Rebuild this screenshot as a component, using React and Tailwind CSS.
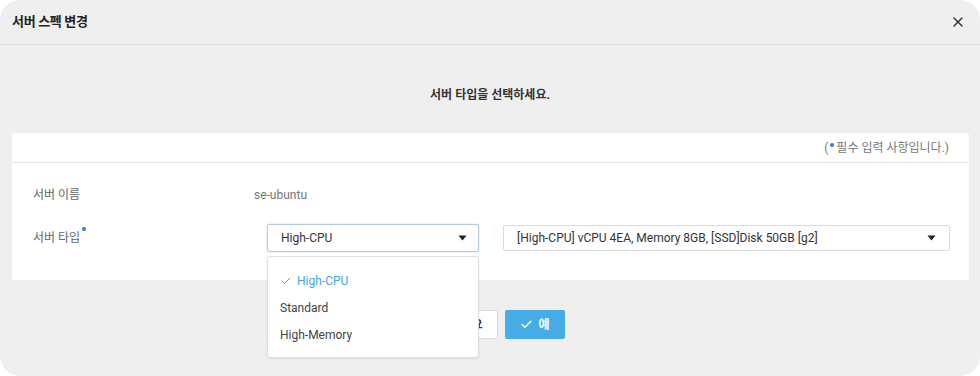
import { Check, X } from 'lucide-react';

const font = { fontFamily: 'Roboto, "Noto Sans CJK KR", sans-serif' };

function Caret() {
  return (
    <svg width="9" height="6" viewBox="0 0 9 6" className="shrink-0">
      <path d="M0.5 0.5 H8.5 L4.5 5.5 Z" fill="#222" />
    </svg>
  );
}

export default function App() {
  const options = ['High-CPU', 'Standard', 'High-Memory'];

  return (
    <div className="w-[980px] h-[376px] bg-white" style={font}>
      <div className="h-full bg-[#efefef] rounded-[20px] flex flex-col overflow-hidden">
        {/* Header */}
        <header className="h-[45px] shrink-0 border-b border-[#dcdcdc] flex items-center justify-between pl-[12px] pr-[14px]">
          <h1 className="text-[13px] font-bold text-[#222] tracking-tight">서버 스펙 변경</h1>
          <X className="h-4 w-4 text-[#333]" strokeWidth={2} />
        </header>

        <p className="mt-[41px] text-center text-[12px] font-bold text-[#333] leading-[18px]">서버 타입을 선택하세요.</p>

        {/* Card */}
        <div className="relative mt-[29px] mx-[12px] mr-[11px] h-[147px] bg-white rounded-[3px]">
          <div className="h-[30px] border-b border-[#e4e4e4] flex items-center justify-end pr-[20px] text-[12px] text-[#777]">
            <span>(</span>
            <span className="w-[4px] h-[4px] rounded-full bg-[#2f7fd8] mx-[2px] -mt-[6px]" />
            <span>필수 입력 사항입니다.)</span>
          </div>

          <div className="pt-[22px] text-[12px]">
            <div className="flex items-center h-[20px]">
              <span className="w-[242px] pl-[21px] text-[#666]">서버 이름</span>
              <span className="text-[#777]">se-ubuntu</span>
            </div>

            <div className="flex items-center mt-[19px] h-[28px]">
              <span className="w-[255px] pl-[21px] text-[#666] flex items-start">
                서버 타입
                <span className="w-[4px] h-[4px] rounded-full bg-[#2f7fd8] ml-[2px] -mt-[2px]" />
              </span>

              <div className="relative">
                <div className="w-[212px] h-[28px] border border-[#b4c9e6] rounded-[2px] shadow-[0_0_2px_#c8d8ee] flex items-center justify-between pl-[13px] pr-[11px] text-[#333]">
                  <span>High-CPU</span>
                  <Caret />
                </div>

                {/* Open dropdown */}
                <div className="absolute left-0 top-[32px] w-[212px] h-[102px] bg-white border border-[#dedede] rounded-[3px] shadow-[0_1px_3px_rgba(0,0,0,0.08)] z-10 pt-[10px] pl-[12px]">
                  {options.map((opt, i) => (
                    <div key={opt} className="h-[27px] flex items-center">
                      {i === 0 ? (
                        <span className="flex items-center text-[#3ea5e6]">
                          <Check className="h-[12px] w-[12px] mr-[5px]" strokeWidth={2} />
                          {opt}
                        </span>
                      ) : (
                        <span className="text-[#444]">{opt}</span>
                      )}
                    </div>
                  ))}
                </div>
              </div>

              <div className="ml-[24px] w-[447px] h-[26px] border border-[#dcdcdc] rounded-[2px] flex items-center justify-between pl-[13px] pr-[13px] text-[#333]">
                <span>[High-CPU] vCPU 4EA, Memory 8GB, [SSD]Disk 50GB [g2]</span>
                <Caret />
              </div>
            </div>
          </div>
        </div>

        {/* Buttons */}
        <div className="mt-[30px] flex justify-center gap-[7px] pl-[3px]">
          <button className="w-[80px] h-[29px] bg-white border border-[#dcdcdc] rounded-[2px] flex items-center justify-center gap-[4px] text-[12px] font-bold text-[#333]">
            <X className="h-[12px] w-[12px]" strokeWidth={2.5} />
            아니요
          </button>
          <button className="w-[60px] h-[29px] bg-[#46ace8] rounded-[2px] flex items-center justify-center gap-[5px] text-[12px] font-bold text-white">
            <Check className="h-[13px] w-[13px]" strokeWidth={3} />
            예
          </button>
        </div>
      </div>
    </div>
  );
}
